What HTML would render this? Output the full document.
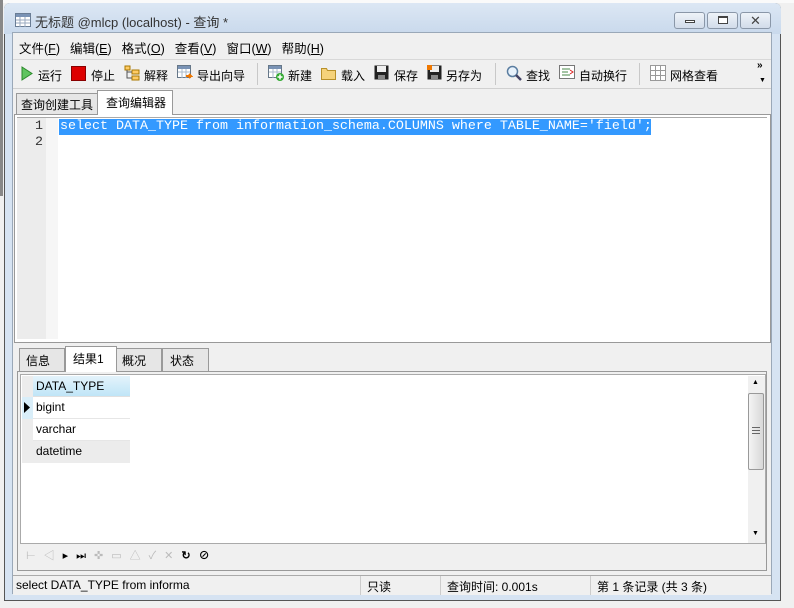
<!DOCTYPE html>
<html><head><meta charset="utf-8"><style>
*{margin:0;padding:0;box-sizing:border-box}
body{width:794px;height:608px;background:#f0f0f0;position:relative;overflow:hidden;font-family:"Liberation Sans","Noto Sans CJK SC",sans-serif;font-size:12px;color:#000}
.a{position:absolute}
.win{left:4px;top:3px;width:777px;height:598px;border:1px solid #555;border-radius:6px 6px 0 0;background:#d6e3f2}
.title{left:4px;top:3px;width:777px;height:31px;background:linear-gradient(#dce7f4,#c9d9ec);border-radius:6px 6px 0 0}
.client{left:12px;top:32px;width:760px;height:562px;background:#f0f0f0;border:1px solid #9aa8b8}
.btn{top:12px;height:17px;border:1px solid #8a97a8;border-radius:3px;background:linear-gradient(#eef3f9,#d2dcea)}
.menu span{margin-right:10px}
.tb{font-size:12px}
.mono{font-family:"Liberation Mono",monospace;font-size:13.33px}
.sep{width:1px;height:22px;background:#c8c8c8;top:63px}
</style></head><body>
<div class="a" style="left:0;top:0;width:794px;height:3px;background:#fafafa"></div>
<div class="a" style="left:0;top:0;width:3px;height:196px;background:#888"></div>
<div class="a win"></div>
<div class="a title"></div>
<svg class="a" style="left:15px;top:13px" width="16" height="14"><rect x="0.5" y="0.5" width="15" height="13" fill="#fff" stroke="#6a7d95"/><rect x="1" y="1" width="14" height="3" fill="#7a93b5"/><path d="M1 7h14M1 10h14M5 4v10M10 4v10" stroke="#9aaabf"/></svg>
<div class="a" style="left:35px;top:12px;font-size:13px;color:#333">无标题 @mlcp (localhost) - 查询 *</div>
<div class="a btn" style="left:674px;width:31px"><div class="a" style="left:10px;top:7px;width:10px;height:3px;border:1px solid #444;background:#fff"></div></div>
<div class="a btn" style="left:707px;width:31px"><div class="a" style="left:10px;top:3px;width:10px;height:8px;border:1px solid #444;border-top-width:2px;background:#fff"></div></div>
<div class="a btn" style="left:740px;width:31px;text-align:center;font-size:13px;line-height:15px;color:#444">✕</div>
<div class="a client"></div>
<div class="a menu" style="left:19px;top:38px;font-size:12.5px"><span>文件(<u>F</u>)</span><span>编辑(<u>E</u>)</span><span>格式(<u>O</u>)</span><span>查看(<u>V</u>)</span><span>窗口(<u>W</u>)</span><span>帮助(<u>H</u>)</span></div>
<div class="a" style="left:13px;top:59px;width:758px;height:1px;background:#d8d8d8"></div>
<svg class="a" style="left:21px;top:66px" width="12" height="15"><path d="M1 1L11 7.5L1 14Z" fill="#5fc45f" stroke="#2a8a2a"/></svg>
<div class="a tb" style="left:38px;top:67px">运行</div>
<div class="a" style="left:71px;top:66px;width:15px;height:15px;background:#d00;border:1px solid #800"></div>
<div class="a tb" style="left:91px;top:67px">停止</div>
<svg class="a" style="left:124px;top:65px" width="16" height="16"><rect x="1" y="1" width="5" height="4" fill="#fc6" stroke="#a70"/><rect x="8" y="5" width="7" height="4" fill="#fc6" stroke="#a70"/><rect x="8" y="11" width="7" height="4" fill="#fc6" stroke="#a70"/><path d="M3 5v8h5M3 7h5" stroke="#555" fill="none"/></svg>
<div class="a tb" style="left:144px;top:67px">解释</div>
<svg class="a" style="left:177px;top:65px" width="16" height="16"><rect x="0.5" y="0.5" width="13" height="12" fill="#fff" stroke="#678"/><rect x="1" y="1" width="12" height="3" fill="#7a93b5"/><path d="M1 7h12M5 4v9M9 4v9" stroke="#abc"/><path d="M9 11h5l-2-2M14 11l-2 2" stroke="#e70" stroke-width="2" fill="none"/></svg>
<div class="a tb" style="left:197px;top:67px">导出向导</div>
<div class="a sep" style="left:257px"></div>
<svg class="a" style="left:268px;top:65px" width="16" height="16"><rect x="0.5" y="0.5" width="13" height="12" fill="#fff" stroke="#678"/><rect x="1" y="1" width="12" height="3" fill="#7a93b5"/><path d="M1 7h12M5 4v9M9 4v9" stroke="#abc"/><circle cx="12" cy="12" r="4" fill="#3a3"/><path d="M12 9.5v5M9.5 12h5" stroke="#fff" stroke-width="1.5"/></svg>
<div class="a tb" style="left:288px;top:67px">新建</div>
<svg class="a" style="left:321px;top:66px" width="16" height="14"><path d="M0.5 2.5h5l1 2h8v9h-14z" fill="#f5d27a" stroke="#b8902a"/></svg>
<div class="a tb" style="left:341px;top:67px">载入</div>
<svg class="a" style="left:374px;top:65px" width="15" height="15"><rect x="0.5" y="0.5" width="14" height="14" fill="#222"/><rect x="3" y="1" width="9" height="6" fill="#eee"/><rect x="4" y="10" width="7" height="4" fill="#888"/></svg>
<div class="a tb" style="left:394px;top:67px">保存</div>
<svg class="a" style="left:427px;top:65px" width="15" height="15"><rect x="0.5" y="0.5" width="14" height="14" fill="#222"/><rect x="3" y="1" width="9" height="6" fill="#eee"/><rect x="4" y="10" width="7" height="4" fill="#888"/><rect x="0" y="0" width="5" height="5" fill="#e70"/></svg>
<div class="a tb" style="left:446px;top:67px">另存为</div>
<div class="a sep" style="left:495px"></div>
<svg class="a" style="left:506px;top:65px" width="16" height="16"><circle cx="6.5" cy="6.5" r="5" fill="#e8f2fc" stroke="#5a7da0" stroke-width="1.5"/><path d="M10 10l5 5" stroke="#446" stroke-width="2.5"/></svg>
<div class="a tb" style="left:526px;top:67px">查找</div>
<svg class="a" style="left:559px;top:65px" width="16" height="14"><rect x="0.5" y="0.5" width="15" height="13" fill="#fff" stroke="#777"/><path d="M3 4h8M3 7h6M3 10h8" stroke="#4a8a4a"/><path d="M11 5l3 2-3 2" stroke="#d22" fill="none"/></svg>
<div class="a tb" style="left:579px;top:67px">自动换行</div>
<div class="a sep" style="left:639px"></div>
<svg class="a" style="left:650px;top:65px" width="16" height="16"><path d="M0.5 0.5h15v15h-15zM5.5 0.5v15M10.5 0.5v15M0.5 5.5h15M0.5 10.5h15" stroke="#999" fill="#fff"/></svg>
<div class="a tb" style="left:670px;top:67px">网格查看</div>
<div class="a" style="left:757px;top:60px;font-size:10px;font-weight:bold">»</div>
<div class="a" style="left:759px;top:77px;font-size:7px">▼</div>
<div class="a" style="left:13px;top:88px;width:758px;height:1px;background:#d0d0d0"></div>
<div class="a" style="left:16px;top:93px;width:82px;height:21px;border:1px solid #999;border-bottom:none;background:#e6e6e6;padding:2px 0 0 4px">查询创建工具</div>
<div class="a" style="left:97px;top:90px;width:76px;height:25px;border:1px solid #999;border-bottom:none;background:#fff;padding:3px 0 0 8px;z-index:2">查询编辑器</div>
<div class="a" style="left:14px;top:114px;width:757px;height:229px;border:1px solid #999;background:#fff"></div>
<div class="a" style="left:17px;top:117px;width:29px;height:222px;background:#ececec"></div>
<div class="a" style="left:46px;top:117px;width:12px;height:222px;background:#f6f6f6"></div>
<div class="a" style="left:17px;top:117px;width:750px;height:1px;background:#aaa"></div>
<div class="a mono" style="left:35px;top:119px;color:#333">1</div>
<div class="a mono" style="left:35px;top:135px;color:#333">2</div>
<div class="a mono" style="left:59px;top:119px;width:592px;height:16px;background:#3399ff;color:#fff;padding:0 0 0 1px;line-height:16px;white-space:pre;overflow:hidden">select DATA_TYPE from information_schema.COLUMNS where TABLE_NAME='field';</div>
<div class="a" style="left:14px;top:343px;width:757px;height:28px;background:#f0f0f0"></div>
<div class="a" style="left:19px;top:348px;width:46px;height:23px;border:1px solid #999;border-bottom:none;background:#e6e6e6;padding:3px 0 0 6px">信息</div>
<div class="a" style="left:65px;top:346px;width:52px;height:26px;border:1px solid #999;border-bottom:none;background:#fff;padding:3px 0 0 7px;z-index:2">结果1</div>
<div class="a" style="left:116px;top:348px;width:46px;height:23px;border:1px solid #999;border-bottom:none;background:#e6e6e6;padding:3px 0 0 5px">概况</div>
<div class="a" style="left:162px;top:348px;width:47px;height:23px;border:1px solid #999;border-bottom:none;background:#e6e6e6;padding:3px 0 0 7px">状态</div>
<div class="a" style="left:17px;top:371px;width:750px;height:200px;border:1px solid #999;background:#f0f0f0"></div>
<div class="a" style="left:20px;top:374px;width:746px;height:170px;border:1px solid #aaa;background:#fff"></div>
<div class="a" style="left:22px;top:376px;width:11px;height:87px;background:#ececec"></div>
<div class="a" style="left:33px;top:376px;width:97px;height:21px;background:linear-gradient(#e4f3fb,#bfe5f7);border-bottom:1px solid #e0e0e0;padding:3px 0 0 3px">DATA_TYPE</div>
<div class="a" style="left:33px;top:397px;width:97px;height:22px;border-bottom:1px solid #e6e6e6;padding:3px 0 0 3px">bigint</div>
<div class="a" style="left:33px;top:419px;width:97px;height:22px;border-bottom:1px solid #e6e6e6;padding:3px 0 0 3px">varchar</div>
<div class="a" style="left:33px;top:441px;width:97px;height:22px;background:#ececec;padding:3px 0 0 3px">datetime</div>
<div class="a" style="left:22px;top:397px;width:11px;height:22px;background:#d9eef9"></div>
<svg class="a" style="left:24px;top:402px" width="7" height="11"><path d="M0 0L6 5.5L0 11Z"/></svg>
<div class="a" style="left:748px;top:376px;width:17px;height:167px;background:#f0f0f0"></div>
<div class="a" style="left:752px;top:379px;font-size:7px">▲</div>
<div class="a" style="left:752px;top:530px;font-size:7px">▼</div>
<div class="a" style="left:748px;top:393px;width:16px;height:77px;border:1px solid #999;border-radius:2px;background:linear-gradient(90deg,#f4f4f4,#d8d8d8)"></div>
<div class="a" style="left:752px;top:427px;width:8px;height:7px;border-top:1px solid #666;border-bottom:1px solid #666"><div style="margin-top:2px;height:1px;background:#666"></div></div>
<div class="a" style="left:26px;top:547px;font-size:11px;letter-spacing:8px;color:#bbb;white-space:nowrap">⊢◁<span style="color:#000">▸⏭</span>✜▭△✓✕<span style="color:#000;font-weight:bold">↻⊘</span></div>
<div class="a" style="left:13px;top:575px;width:758px;height:20px;background:#f0f0f0;border-top:1px solid #aaa"></div>
<div class="a" style="left:16px;top:578px;width:180px;overflow:hidden;white-space:nowrap">select DATA_TYPE from informa</div>
<div class="a" style="left:360px;top:576px;width:1px;height:19px;background:#ccc"></div>
<div class="a" style="left:367px;top:578px">只读</div>
<div class="a" style="left:440px;top:576px;width:1px;height:19px;background:#ccc"></div>
<div class="a" style="left:447px;top:578px">查询时间: 0.001s</div>
<div class="a" style="left:590px;top:576px;width:1px;height:19px;background:#ccc"></div>
<div class="a" style="left:597px;top:578px">第 1 条记录 (共 3 条)</div>
</body></html>
